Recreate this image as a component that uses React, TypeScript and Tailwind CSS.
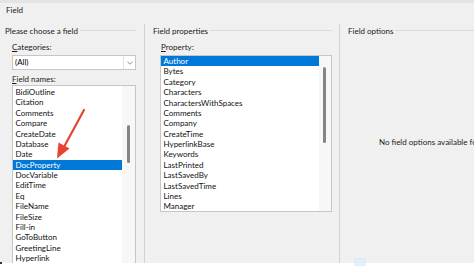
import React from "react";

const leftItems = [
  "BidiOutline",
  "Citation",
  "Comments",
  "Compare",
  "CreateDate",
  "Database",
  "Date",
  "DocProperty",
  "DocVariable",
  "EditTime",
  "Eq",
  "FileName",
  "FileSize",
  "Fill-in",
  "GoToButton",
  "GreetingLine",
  "Hyperlink",
];

const rightItems = [
  "Author",
  "Bytes",
  "Category",
  "Characters",
  "CharactersWithSpaces",
  "Comments",
  "Company",
  "CreateTime",
  "HyperlinkBase",
  "Keywords",
  "LastPrinted",
  "LastSavedBy",
  "LastSavedTime",
  "Lines",
  "Manager",
];

function Header({ text }: { text: string }) {
  return (
    <div className="mt-[2px] h-[10px] shrink-0 flex items-center gap-[2px]">
      <span className="leading-[10px] whitespace-nowrap text-[#1a1a1a]">{text}</span>
      <div className="flex-1 h-px bg-[#dadada] -mt-[1px]" />
    </div>
  );
}

function Row({ text, selected }: { text: string; selected?: boolean }) {
  return (
    <div
      className={
        "h-[10.38px] leading-[10.38px] pl-[2.5px] whitespace-nowrap " +
        (selected ? "bg-[#0078d7] text-white" : "text-[#111]")
      }
    >
      {text}
    </div>
  );
}

export default function App() {
  return (
    <div
      className="w-[474px] h-[266px] bg-white relative overflow-hidden text-[8px]"
      style={{ fontFamily: 'Lato, "Open Sans", sans-serif' }}
    >
      <div className="h-[3px] bg-[#e4e4e4]" />
      <div className="h-[260px] bg-[#f0f0f0] flex flex-col overflow-hidden">
        <div className="h-[21px] shrink-0 pl-[6px] pt-[2px] leading-[10px] text-[#1a1a1a]">Field</div>
        <div className="h-[239px] shrink-0 flex overflow-hidden">
          {/* Column 1 */}
          <div className="w-[144px] shrink-0 pl-[5px] pr-[8px] flex flex-col overflow-hidden">
            <Header text="Please choose a field" />
            <div className="pl-[7px] flex flex-col">
              <div className="mt-[6px] h-[11px] leading-[11px] text-[#1a1a1a]">
                <span className="underline">C</span>ategories:
              </div>
              <div className="mt-[2px] h-[15px] bg-white border border-[#c6c6c6] flex items-center">
                <div className="flex-1 pl-[2px] leading-[13px]">(All)</div>
                <div className="w-[12px] h-full border-l border-[#e2e2e2] flex items-center justify-center">
                  <svg width="6" height="4" viewBox="0 0 6 4">
                    <path d="M0.5 0.8 L3 3.2 L5.5 0.8" fill="none" stroke="#777" strokeWidth="0.8" />
                  </svg>
                </div>
              </div>
              <div className="mt-[4px] h-[11px] leading-[11px] text-[#1a1a1a]">
                <span className="underline">F</span>ield names:
              </div>
              <div className="h-[200px] shrink-0 bg-white border border-[#c6c6c6] border-b-0 flex overflow-hidden">
                <div className="flex-1 pt-[1px] overflow-hidden">
                  {leftItems.map((t) => (
                    <Row key={t} text={t} selected={t === "DocProperty"} />
                  ))}
                </div>
                <div className="w-[13px] bg-[#f7f7f7] flex justify-center">
                  <div className="mt-[39px] w-[2.5px] h-[38px] rounded-full bg-[#858585]" />
                </div>
              </div>
            </div>
          </div>
          <div className="w-px shrink-0 bg-[#d2d2d2]" />
          {/* Column 2 */}
          <div className="w-[194px] shrink-0 pl-[8px] pr-[7px] flex flex-col overflow-hidden">
            <Header text="Field properties" />
            <div className="pl-[7px] flex flex-col">
              <div className="mt-[6px] h-[11px] leading-[11px] pl-[1px] text-[#1a1a1a]">
                <span className="underline">P</span>roperty:
              </div>
              <div className="mt-[2px] h-[157px] shrink-0 bg-white border border-[#c6c6c6] flex overflow-hidden">
                <div className="flex-1 overflow-hidden">
                  {rightItems.map((t) => (
                    <Row key={t} text={t} selected={t === "Author"} />
                  ))}
                </div>
                <div className="w-[12px] bg-[#f7f7f7] flex justify-center">
                  <div className="mt-[11px] -ml-[1px] w-[2.5px] h-[76px] rounded-full bg-[#858585]" />
                </div>
              </div>
            </div>
          </div>
          <div className="w-px shrink-0 bg-[#d2d2d2]" />
          {/* Column 3 */}
          <div className="flex-1 pl-[8px] flex flex-col overflow-hidden">
            <Header text="Field options" />
            <div className="mt-[101px] pl-[31px] whitespace-nowrap text-[#1a1a1a] leading-[10px]">
              No field options available for this field
            </div>
          </div>
        </div>
      </div>
      <div className="absolute left-0 bottom-[2px] w-[2px] h-[2px] bg-[#333]" />
      <div className="absolute left-[354px] bottom-0 w-[12px] h-[8px] bg-[#dce9f6] opacity-70" />
      <svg className="absolute left-0 top-0" width="474" height="266" viewBox="0 0 474 266">
        <line x1="84" y1="110" x2="64.5" y2="146" stroke="#e8432f" strokeWidth="2.2" strokeLinecap="round" />
        <polygon points="57,158.5 58.5,142.5 69.5,148.5" fill="#e8432f" />
      </svg>
    </div>
  );
}
